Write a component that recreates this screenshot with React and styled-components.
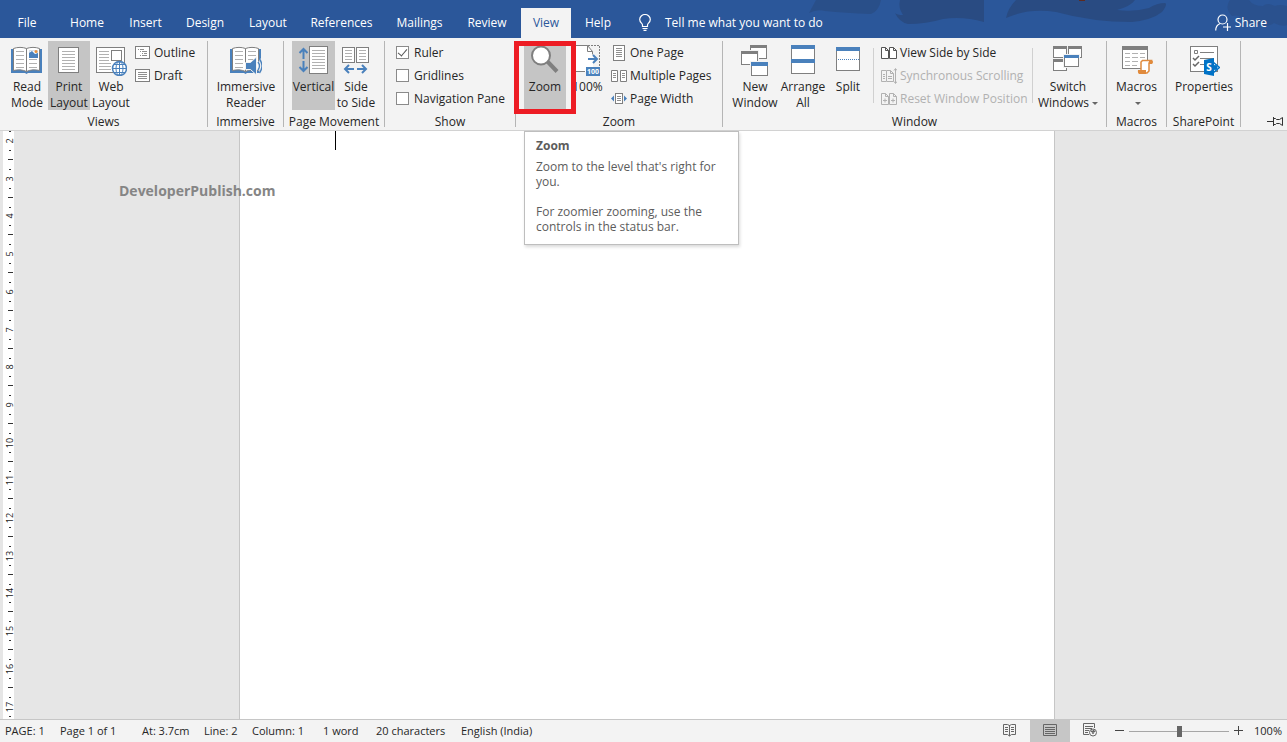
import React, { useState } from "react";
import styled, { createGlobalStyle } from "styled-components";

const GREY = "#7f7f7f";
const LIGHT = "#b1b1b1";
const BLUE = "#4a81bc";

const GlobalStyle = createGlobalStyle`
  * {
    box-sizing: border-box;
  }
  body {
    margin: 0;
    font-family: "Open Sans", "Noto Sans", sans-serif;
    font-size: 12px;
    color: #262626;
  }
  button, input {
    font: inherit;
    color: inherit;
  }
  button {
    border: 0;
    padding: 0;
    background: none;
    white-space: nowrap;
  }
`;

const Window = styled.div`
  display: flex;
  flex-direction: column;
  height: 100vh;
  overflow: hidden;
  background: #e6e6e6;
`;

const Header = styled.header`
  position: relative;
  display: flex;
  flex: none;
  align-items: flex-end;
  height: 38px;
  background: #2b579a;
  color: #fff;
`;

const HeaderArt = styled.svg`
  position: absolute;
  top: 0;
  right: 0;
`;

const Tabs = styled.nav`
  display: flex;
`;

const Tab = styled.button`
  width: ${(p) => p.$width}px;
  height: 30px;
  padding-bottom: 1px;
  text-align: center;
  background: ${(p) => (p.$active ? "#f3f3f3" : "transparent")};
  color: ${(p) => (p.$active ? "#2b579a" : "#fff")};
`;

const HeaderButton = styled.button`
  position: relative;
  display: flex;
  align-items: center;
  gap: ${(p) => p.$gap}px;
  height: 30px;
  padding-bottom: 1px;
  margin-left: ${(p) => (p.$end ? "auto" : "14px")};
  margin-right: ${(p) => (p.$end ? "20px" : "0")};
`;

const Ribbon = styled.div`
  display: flex;
  flex: none;
  height: 93px;
  padding-top: 3px;
  background: #f3f3f3;
  border-bottom: 1px solid #d2d2d2;
`;

const Group = styled.section`
  display: flex;
  flex: none;
  flex-direction: column;
  width: ${(p) => p.$width}px;
  height: 86px;
  border-right: 1px solid #b5b5b5;
`;

const GroupBody = styled.div`
  display: flex;
  flex: none;
  height: 73px;
  padding-left: ${(p) => p.$indent}px;
`;

const GroupLabel = styled.div`
  line-height: 16px;
  text-align: center;
  white-space: nowrap;
`;

const BigButton = styled.button`
  display: flex;
  flex: none;
  flex-direction: column;
  align-items: center;
  width: ${(p) => p.$width}px;
  height: 69px;
  padding-top: 3px;
  background: ${(p) => (p.$active ? "#c5c5c5" : "transparent")};
  svg {
    flex: none;
  }
`;

const BigLabel = styled.span`
  display: block;
  flex: none;
  margin-top: 3px;
  line-height: 16px;
  text-align: center;
`;

const Caret = styled.i`
  display: inline-block;
  margin-left: 3px;
  vertical-align: middle;
  border: 3px solid transparent;
  border-top-color: #666;
  border-bottom: 0;
`;

const Column = styled.div`
  display: flex;
  flex: none;
  flex-direction: column;
  width: ${(p) => (p.$width ? `${p.$width}px` : "auto")};
  padding-left: ${(p) => p.$indent || 0}px;
`;

const SmallButton = styled.button`
  display: flex;
  align-items: center;
  gap: 3px;
  height: 23px;
  color: ${(p) => (p.disabled ? "#b1b1b1" : "inherit")};
  svg {
    flex: none;
  }
`;

const CheckRow = styled.label`
  display: flex;
  align-items: center;
  gap: 5px;
  height: 23px;
  white-space: nowrap;
`;

const Check = styled.input`
  appearance: none;
  display: grid;
  place-items: center;
  width: 13px;
  height: 13px;
  margin: 0;
  border: 1px solid #8a8a8a;
  background: #fff;
  &:checked::after {
    content: "";
    width: 4px;
    height: 8px;
    margin-top: -2px;
    border: solid #555;
    border-width: 0 1px 1px 0;
    transform: rotate(40deg);
  }
`;

const Divider = styled.div`
  width: 1px;
  height: 55px;
  margin: 7px ${(p) => p.$right}px 0 ${(p) => p.$left}px;
  background: #d0d0d0;
`;

const PinButton = styled.button`
  align-self: flex-end;
  height: 16px;
  margin: 0 4px 1px auto;
`;

const ZoomAnchor = styled.div`
  position: relative;
`;

const Highlight = styled.div`
  position: absolute;
  z-index: 1;
  inset: 0 -10px 0;
  border: 5px solid #ed1c24;
  pointer-events: none;
`;

const Tooltip = styled.div`
  position: absolute;
  z-index: 2;
  top: 90px;
  left: 0;
  width: 215px;
  padding: 6px 11px 10px;
  border: 1px solid #bebebe;
  background: #fff;
  box-shadow: 1px 2px 3px rgba(0, 0, 0, 0.15);
  color: #5c5c5c;
  line-height: 15px;
  p {
    margin: 0 0 15px;
  }
  p:last-child {
    margin: 0;
  }
`;

const TooltipTitle = styled.strong`
  display: block;
  margin-bottom: 6px;
`;

const Workspace = styled.main`
  position: relative;
  display: flex;
  flex: 1;
  min-height: 0;
`;

const Ruler = styled.svg`
  flex: none;
  width: 11px;
  height: 100%;
  margin-left: 3px;
  background: #fff;
  overflow: visible;
  clip-path: inset(0 -3px);
`;

const Canvas = styled.div`
  display: flex;
  flex: 1;
  justify-content: center;
  padding-right: 7px;
`;

const Page = styled.article`
  width: 816px;
  padding-left: 95px;
  border: solid #c6c6c6;
  border-width: 0 1px;
  background: #fff;
`;

const TextCursor = styled.div`
  width: 1px;
  height: 19px;
  background: #000;
`;

const Watermark = styled.div`
  position: absolute;
  top: 50px;
  left: 119px;
  font-size: 14px;
  font-weight: 700;
  line-height: 20px;
  color: #858585;
`;

const StatusBar = styled.footer`
  display: flex;
  flex: none;
  align-items: center;
  height: 23px;
  border-top: 1px solid #c6c6c6;
  background: #f3f3f3;
`;

const StatusItem = styled.button`
  width: ${(p) => p.$width}px;
  padding: 0 0 2px 5px;
  font-size: 11px;
  text-align: left;
`;

const ViewSwitch = styled.div`
  display: flex;
  margin-left: auto;
`;

const ViewButton = styled.button`
  display: grid;
  place-items: center;
  width: 40px;
  height: 22px;
  padding-bottom: 2px;
  background: ${(p) => (p.$active ? "#c6c6c6" : "transparent")};
`;

const StepButton = styled.button`
  display: grid;
  place-items: center;
  width: 19px;
  height: 22px;
  padding-bottom: 1px;
`;

const Slider = styled.input`
  appearance: none;
  width: 100px;
  height: 22px;
  margin: 0;
  background: linear-gradient(#a6a6a6, #a6a6a6) center / 100% 1px no-repeat;
  &::-webkit-slider-thumb {
    appearance: none;
    width: 5px;
    height: 11px;
    background: #666;
  }
`;

const Percent = styled.button`
  width: 39px;
  padding: 0 5px 2px 0;
  font-size: 11px;
  text-align: right;
`;

const Big = ({ children }) => (
  <svg width="32" height="32" viewBox="0 0 32 32" fill="none">{children}</svg>
);

const Small = ({ children }) => (
  <svg width="16" height="16" viewBox="0 0 16 16" fill="none">{children}</svg>
);

const Lines = ({ x, y, w, n, step, color = LIGHT }) => (
  <path
    stroke={color}
    d={Array.from({ length: n }, (_, i) => `M${x} ${y + i * step + 0.5}h${w}`).join("")}
  />
);

const Book = () => (
  <>
    <path fill={BLUE} d="M0 5h31v24H17l-1.500 1-1.500-1H0z" />
    <path fill="#fff" stroke={GREY} d="M2.500 4.500c4-1.500 9-1.500 13 0 4-1.500 9-1.500 13 0v22c-4-1-9-1-13 1-4-2-9-2-13-1z" />
    <path stroke={GREY} d="M15.500 4.500v23" />
    <Lines x={5} y={7} w={8} n={5} step={4} />
  </>
);

const ReadModeIcon = () => (
  <Big>
    <Book />
    <Lines x={18} y={15} w={8} n={3} step={4} />
    <rect x="18.500" y="6.500" width="8" height="7" fill="#fff" stroke="#d5dfea" />
    <path fill={BLUE} d="M18 14V9l3-2 3 3 3-1v5z" />
    <circle cx="25" cy="7.500" r="1.500" fill="#e8923c" />
  </Big>
);

const PrintLayoutIcon = () => (
  <Big>
    <rect x="5.500" y="3.500" width="20" height="25" fill="#fff" stroke={GREY} />
    <Lines x={9} y={7} w={13} n={7} step={3} />
  </Big>
);

const WebLayoutIcon = () => (
  <Big>
    <rect x="1.500" y="3.500" width="28" height="25" fill="#fff" stroke={GREY} />
    <Lines x={4} y={7} w={10} n={4} step={3} />
    <Lines x={4} y={19} w={12} n={3} step={3} />
    <rect x="16.500" y="6.500" width="10" height="10" stroke={GREY} />
    <circle cx="24.500" cy="24.500" r="7" fill="#fff" stroke={BLUE} strokeWidth="1.500" />
    <path stroke={BLUE} d="M17.500 24.500h14M19 20.500h11M19 28.500h11M24.500 17.500v14" />
    <ellipse cx="24.500" cy="24.500" rx="3.500" ry="7" stroke={BLUE} />
  </Big>
);

const OutlineIcon = () => (
  <Small>
    <rect x=".5" y="1.500" width="14" height="12" fill="#fff" stroke={GREY} />
    <path stroke="#8f8f8f" d="M3 4.500h1M5 4.500h4M5 6.500h1M7 6.500h5M7 8.500h1M9 8.500h3M5 10.500h1M7 10.500h5" />
  </Small>
);

const DraftIcon = () => (
  <Small>
    <rect x=".5" y="1.500" width="14" height="12" fill="#fff" stroke={GREY} />
    <Lines x={3} y={4} w={9} n={4} step={2} color="#8f8f8f" />
  </Small>
);

const ImmersiveIcon = () => (
  <Big>
    <Book />
    <Lines x={18} y={7} w={8} n={3} step={4} />
    <path fill={BLUE} stroke="#f3f3f3" d="M15.500 18.500h5l6-5.500v18l-6-5.500h-5z" />
    <path stroke="#f3f3f3" strokeWidth="3" d="M28 18q3 4 0 8M30 15q5 7 0 14" />
    <path stroke={BLUE} strokeWidth="1.300" d="M28 18q3 4 0 8M29.500 15q5 7 0 14" />
  </Big>
);

const VerticalIcon = () => (
  <Big>
    <rect x="11.500" y="2.500" width="18" height="27" fill="#fff" stroke={GREY} />
    <Lines x={14} y={6} w={13} n={7} step={3} />
    <path stroke={BLUE} strokeWidth="2" d="M5.500 15V5M1.500 9l4-4 4 4M5.500 17v10M1.500 23l4 4 4-4" />
  </Big>
);

const SideIcon = () => (
  <Big>
    <rect x="2.500" y="3.500" width="12" height="15" fill="#fff" stroke={GREY} />
    <rect x="16.500" y="3.500" width="12" height="15" fill="#fff" stroke={GREY} />
    <Lines x={5} y={6} w={7} n={4} step={3} />
    <Lines x={19} y={6} w={7} n={4} step={3} />
    <path stroke={BLUE} strokeWidth="2" d="M14 25H5M9 21l-4 4 4 4M17 25h9M22 21l4 4-4 4" />
  </Big>
);

const ZoomIcon = () => (
  <Big>
    <path stroke={GREY} strokeWidth="4" d="m18 17 10 10.500" />
    <circle cx="12" cy="11.500" r="9" fill="#fff" stroke={GREY} strokeWidth="2" />
  </Big>
);

const HundredIcon = () => (
  <Big>
    <path fill="#fff" d="M3 2h12l6 6v20H3z" />
    <path stroke={GREY} d="M3 1.500h12.500l5 6v3M15.500 1.500v6h5M3 27.500h10" />
    <path stroke={GREY} strokeDasharray="2 1" d="M16 1.500h11.500v21" />
    <path stroke={BLUE} strokeWidth="2" d="M16 15h9M21 11l4 4-4 4" />
    <rect x="14" y="23" width="14" height="9" fill={BLUE} />
    <text x="21" y="30" fill="#fff" fontSize="7" fontWeight="700" textAnchor="middle">100</text>
  </Big>
);

const OnePageIcon = () => (
  <Small>
    <rect x="2.500" y=".5" width="11" height="15" fill="#fff" stroke={GREY} />
    <Lines x={5} y={3} w={6} n={5} step={2} color="#8f8f8f" />
  </Small>
);

const MultiplePagesIcon = () => (
  <Small>
    <path fill="#fff" stroke={GREY} d="M.5 2.500h6v11h-6zM9.500 2.500h6v11h-6z" />
    <path stroke="#8f8f8f" d="M2 5.500h3M2 7.500h3M2 9.500h3M11 5.500h3M11 7.500h3M11 9.500h3" />
  </Small>
);

const PageWidthIcon = () => (
  <Small>
    <rect x="4.500" y="2.500" width="7" height="10" fill="#fff" stroke={GREY} />
    <Lines x={6} y={5} w={4} n={3} step={2} color="#8f8f8f" />
    <path fill={BLUE} d="m0 7.500 3-3v6zM16 7.500l-3-3v6z" />
  </Small>
);

const Pane = ({ x, y, w, h, color = GREY, bar = 3 }) => (
  <>
    <rect x={x + 0.5} y={y + 0.5} width={w - 1} height={h - 1} fill="#fff" stroke={GREY} />
    <rect x={x} y={y} width={w} height={bar} fill={color} />
  </>
);

const NewWindowIcon = () => (
  <Big>
    <Pane x={11} y={1} w={17} h={14} />
    <rect x="1" y="6" width="19" height="16" fill="#f3f3f3" />
    <Pane x={2} y={7} w={17} h={14} />
    <rect x="11" y="17" width="19" height="16" fill="#f3f3f3" />
    <Pane x={12} y={18} w={17} h={14} color={BLUE} bar={4} />
  </Big>
);

const ArrangeIcon = () => (
  <Big>
    <Pane x={4} y={1} w={24} h={15} color={BLUE} bar={4} />
    <Pane x={4} y={15} w={24} h={15} color={BLUE} bar={4} />
  </Big>
);

const SplitIcon = () => (
  <Big>
    <Pane x={4} y={3} w={24} h={24} color={BLUE} bar={4} />
    <path stroke={BLUE} strokeDasharray="1 1" d="M6 15.500h21" />
  </Big>
);

const SwitchIcon = () => (
  <Big>
    <Pane x={1} y={2} w={14} h={12} />
    <Pane x={16} y={2} w={14} h={12} />
    <Pane x={1} y={15} w={14} h={12} />
    <rect x="11" y="10" width="17" height="14" fill="#f3f3f3" />
    <Pane x={12} y={11} w={15} h={12} color={BLUE} />
  </Big>
);

const SideBySideIcon = () => (
  <Small>
    <path fill="#fff" stroke="#555" d="M.5 2.500h4l3 3v8h-7zM8.500 2.500h4l3 3v8h-7zM4.500 2.500v3h3M12.500 2.500v3h3" />
  </Small>
);

const SyncIcon = () => (
  <Small>
    <path stroke={LIGHT} d="M5 2.500H.5v11H5M5.500 2.500h4l3 3v8h-7zM9.500 2.500v3h3M14.500 1v14M13 2.500l1.500-2 1.500 2M13 13.500l1.500 2 1.500-2M2 6.500h2M2 8.500h2M2 10.500h2M7 8.500h4M7 10.500h4" />
  </Small>
);

const ResetIcon = () => (
  <Small>
    <path stroke={LIGHT} d="M.5 2.500h4l3 3v8h-7zM8.500 2.500h4l3 3v8h-7zM4.500 2.500v3h3M12.500 2.500v3h3" />
    <path stroke={LIGHT} d="M2 9.500h4M4 7.500v4M10 9.500h4M12 7.500v4" />
  </Small>
);

const MacrosIcon = () => (
  <Big>
    <Pane x={1} y={2} w={26} h={23} bar={4} />
    <path stroke={LIGHT} d="M4 9.500h5M11 9.500h6M19 9.500h5M4 13.500h5M11 13.500h6M19 13.500h5M4 17.500h5M11 17.500h6M4 21.500h5M11 21.500h5" />
    <path fill="#fff" stroke="#e08a3c" strokeWidth="1.500" d="M21.500 16.500H30l-2 2.500v8l-2 2h-7l1-3V18z" />
    <path fill="#e08a3c" d="M17 26h8v4h-7q-1.500-1-1-4zM28 16h3q2 2 0 4h-3z" />
  </Big>
);

const PropertiesIcon = () => (
  <Big>
    <rect x="2.500" y="2.500" width="27" height="25" fill="#fff" stroke={GREY} />
    <path stroke={GREY} d="M6.500 6.500h3v3h-3zM12 8.500h14M12 14.500h14M12 20.500h8" />
    <path stroke="#666" strokeWidth="1.500" d="m5 14 2 2 4-4M5 20l2 2 4-4" />
    <path fill="#fff" stroke="#0072c6" strokeWidth="1.500" d="m25 18 6.500 5.500L25 29z" />
    <circle cx="27" cy="23.500" r="2.500" fill="#0072c6" />
    <path fill="#0072c6" d="m16 16 10-2v18l-10-2z" />
    <text x="21" y="27" fill="#fff" fontSize="10" fontWeight="700" textAnchor="middle">S</text>
  </Big>
);

const PinIcon = () => (
  <svg width="16" height="10" viewBox="0 0 16 10" fill="none">
    <path stroke="#333" d="M0 5.500h6M6.500 1v9M6.500 2.500h2l1 1h3l3-2v8l-3-2h-3l-1 1h-2" />
  </svg>
);

const BulbIcon = () => (
  <svg width="12" height="17" viewBox="0 0 12 17" fill="none" stroke="#fff" strokeWidth="1.200">
    <path d="M3.500 12.500V11C3.500 9.500.7 8.500.7 5.500a5.300 5 0 0 1 10.600 0c0 3-2.800 4-2.800 5.500v1.500zM3.500 14.500h5M4.500 16.300h3" />
  </svg>
);

const ShareIcon = () => (
  <svg width="16" height="17" viewBox="0 0 16 17" fill="none" stroke="#fff" strokeWidth="1.200">
    <circle cx="7.500" cy="5.500" r="4.500" />
    <path d="M.7 16.500c0-4 2-6 4.500-7M12.500 9v8M8 13h8" />
  </svg>
);

const StatusBook = () => (
  <svg width="14" height="14" viewBox="0 0 14 14" fill="none" stroke="#666">
    <path d="M.5 1.500h4l2 1 2-1h4v10h-4l-2 1.500-2-1.500h-4zM6.500 2v11M2 4.500h3M2 6.500h3M2 8.500h3M8 4.500h3M8 6.500h3M8 8.500h3" />
  </svg>
);

const StatusPage = () => (
  <svg width="14" height="14" viewBox="0 0 14 14" fill="none" stroke="#666">
    <path d="M.5 1.500h13v11H.5zM2 4.500h10M2 6.500h10M2 8.500h10M2 10.500h10" />
  </svg>
);

const StatusWeb = () => (
  <svg width="14" height="14" viewBox="0 0 14 14" fill="none" stroke="#666">
    <path d="M6 11.500H.5V.5h11V5M2 3.500h8M2 5.500h7M2 7.500h4M2 9.500h3" />
    <circle cx="10" cy="9.500" r="3.500" />
    <path strokeWidth="1.500" d="M8 8l2 1v2M10 7l2 2" />
  </svg>
);

const tabs = [
  ["File", 54], ["Home", 66], ["Insert", 51], ["Design", 68], ["Layout", 58],
  ["References", 89], ["Mailings", 67], ["Review", 68], ["View", 50], ["Help", 54],
];

const rulerNumbers = Array.from({ length: 17 }, (_, i) => i + 1);

const statusItems = [
  ["PAGE: 1", 55], ["Page 1 of 1", 82], ["At: 3.7cm", 62], ["Line: 2", 48],
  ["Column: 1", 71], ["1 word", 53], ["20 characters", 85], ["English (India)", 90],
];

const Command = ({ icon, lines, width, active, caret }) => (
  <BigButton $width={width} $active={active}>
    {icon}
    <BigLabel>
      {lines.map((line, i) => (
        <React.Fragment key={i}>
          {i > 0 && <br />}
          {line}
        </React.Fragment>
      ))}
      {caret && <Caret />}
    </BigLabel>
  </BigButton>
);

const RibbonGroup = ({ label, width, indent, children }) => (
  <Group $width={width} aria-label={label}>
    <GroupBody $indent={indent}>{children}</GroupBody>
    <GroupLabel>{label}</GroupLabel>
  </Group>
);

const App = () => {
  const [activeTab, setActiveTab] = useState("View");
  const [zoom, setZoom] = useState(100);
  const [show, setShow] = useState({ Ruler: true, Gridlines: false, "Navigation Pane": false });

  return (
    <Window>
      <GlobalStyle />
      <Header>
        <HeaderArt width="487" height="38" viewBox="0 0 487 38" fill="#294b82">
          <path d="M16 0 9 13q8-4 16-2 20 2 46 3 8-3 10-14z" opacity=".7" />
          <path d="M100 0q-2 8 3 15-6 0-8-2 4 9 13 11 18 0 35-5 20-3 41 3V0z" />
          <path d="M216 0q-8 8-10 18 22-10 50-6 36 10 76 10 20-2 30-10 6-8 3-9-8 0-16 5-14 4-32 2 14-4 18-10z" />
          <path d="M430 0q-6 8 2 16 8-2 10 3 4 6 12 4 12 6 20 0 8 4 13 2V6q-8-2-12 0-8-4-12 0-10 0-14-6z" opacity=".5" />
          <path fill="#5d2a20" d="M279 0h6v1h-6z" />
        </HeaderArt>
        <Tabs>
          {tabs.map(([name, width]) => (
            <Tab key={name} $width={width} $active={name === activeTab} onClick={() => setActiveTab(name)}>
              {name}
            </Tab>
          ))}
        </Tabs>
        <HeaderButton $gap={14}><BulbIcon />Tell me what you want to do</HeaderButton>
        <HeaderButton $gap={4} $end><ShareIcon />Share</HeaderButton>
      </Header>

      <Ribbon>
        <RibbonGroup label="Views" width={208} indent={6}>
          <Command icon={<ReadModeIcon />} lines={["Read", "Mode"]} width={42} />
          <Command icon={<PrintLayoutIcon />} lines={["Print", "Layout"]} width={42} active />
          <Command icon={<WebLayoutIcon />} lines={["Web", "Layout"]} width={42} />
          <Column $indent={3}>
            <SmallButton><OutlineIcon />Outline</SmallButton>
            <SmallButton><DraftIcon />Draft</SmallButton>
          </Column>
        </RibbonGroup>
        <RibbonGroup label="Immersive" width={76} indent={7}>
          <Command icon={<ImmersiveIcon />} lines={["Immersive", "Reader"]} width={62} />
        </RibbonGroup>
        <RibbonGroup label="Page Movement" width={101} indent={8}>
          <Command icon={<VerticalIcon />} lines={["Vertical"]} width={43} active />
          <Command icon={<SideIcon />} lines={["Side", "to Side"]} width={42} />
        </RibbonGroup>
        <RibbonGroup label="Show" width={131} indent={11}>
          <Column>
            {Object.keys(show).map((name) => (
              <CheckRow key={name}>
                <Check
                  type="checkbox"
                  checked={show[name]}
                  onChange={() => setShow({ ...show, [name]: !show[name] })}
                />
                {name}
              </CheckRow>
            ))}
          </Column>
        </RibbonGroup>
        <RibbonGroup label="Zoom" width={207} indent={8}>
          <ZoomAnchor>
            <Command icon={<ZoomIcon />} lines={["Zoom"]} width={42} active />
            <Highlight />
            <Tooltip role="tooltip">
              <TooltipTitle>Zoom</TooltipTitle>
              <p>Zoom to the level that's right for you.</p>
              <p>For zoomier zooming, use the controls in the status bar.</p>
            </Tooltip>
          </ZoomAnchor>
          <Command icon={<HundredIcon />} lines={["100%"]} width={43} />
          <Column $indent={2}>
            <SmallButton><OnePageIcon />One Page</SmallButton>
            <SmallButton><MultiplePagesIcon />Multiple Pages</SmallButton>
            <SmallButton><PageWidthIcon />Page Width</SmallButton>
          </Column>
        </RibbonGroup>
        <RibbonGroup label="Window" width={384} indent={8}>
          <Command icon={<NewWindowIcon />} lines={["New", "Window"]} width={48} />
          <Command icon={<ArrangeIcon />} lines={["Arrange", "All"]} width={48} />
          <Command icon={<SplitIcon />} lines={["Split"]} width={42} />
          <Divider $left={4} $right={7} />
          <Column $width={143}>
            <SmallButton><SideBySideIcon />View Side by Side</SmallButton>
            <SmallButton disabled><SyncIcon />Synchronous Scrolling</SmallButton>
            <SmallButton disabled><ResetIcon />Reset Window Position</SmallButton>
          </Column>
          <Divider $left={8} $right={4} />
          <Command icon={<SwitchIcon />} lines={["Switch", "Windows"]} width={62} caret />
        </RibbonGroup>
        <RibbonGroup label="Macros" width={60} indent={5}>
          <Command icon={<MacrosIcon />} lines={["Macros", ""]} width={49} caret />
        </RibbonGroup>
        <RibbonGroup label="SharePoint" width={74} indent={6}>
          <Command icon={<PropertiesIcon />} lines={["Properties"]} width={62} />
        </RibbonGroup>
        <PinButton aria-label="Pin the ribbon"><PinIcon /></PinButton>
      </Ribbon>

      <Workspace>
        <Ruler>
          {rulerNumbers.map((n) => {
            const y = Math.round(10 + (n - 2) * 37.7);
            return (
              <g key={n} stroke="#333">
                {n > 1 && (
                  <text
                    x="6"
                    y={y}
                    transform={`rotate(-90 6 ${y})`}
                    dy="4"
                    fill="#222"
                    stroke="none"
                    fontSize="9"
                    textAnchor="middle"
                  >
                    {n}
                  </text>
                )}
                <path d={`M6 ${y + 9.5}h2M5 ${y + 18.5}h5M6 ${y + 28.5}h2`} />
              </g>
            );
          })}
        </Ruler>
        <Canvas>
          <Page><TextCursor /></Page>
        </Canvas>
        <Watermark>DeveloperPublish.com</Watermark>
      </Workspace>

      <StatusBar>
        {statusItems.map(([text, width]) => (
          <StatusItem key={text} $width={width}>{text}</StatusItem>
        ))}
        <ViewSwitch>
          <ViewButton aria-label="Read Mode"><StatusBook /></ViewButton>
          <ViewButton aria-label="Print Layout" $active><StatusPage /></ViewButton>
          <ViewButton aria-label="Web Layout"><StatusWeb /></ViewButton>
        </ViewSwitch>
        <StepButton aria-label="Zoom out" onClick={() => setZoom(zoom - 10)}>
          <svg width="9" height="9"><path stroke="#444" d="M0 4.500h9" /></svg>
        </StepButton>
        <Slider
          type="range"
          min="0"
          max="200"
          value={zoom}
          aria-label="Zoom level"
          onChange={(e) => setZoom(Number(e.target.value))}
        />
        <StepButton aria-label="Zoom in" onClick={() => setZoom(zoom + 10)}>
          <svg width="9" height="9"><path stroke="#444" d="M0 4.500h9M4.500 0v9" /></svg>
        </StepButton>
        <Percent>{zoom}%</Percent>
      </StatusBar>
    </Window>
  );
};

export default App;
